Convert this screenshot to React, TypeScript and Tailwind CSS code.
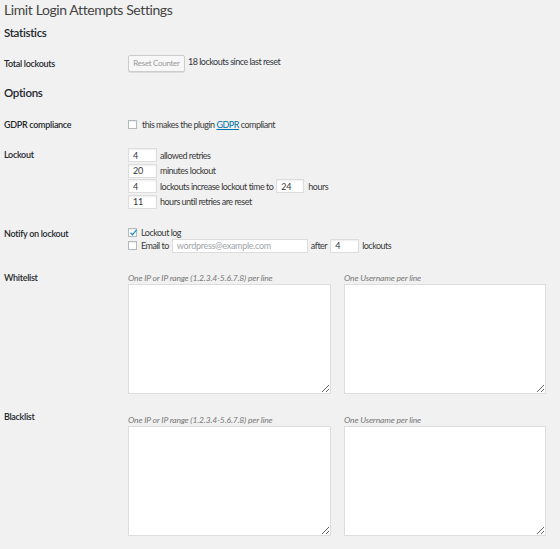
import React from "react";

const Check = ({ checked }: { checked?: boolean }) => (
  <span className="relative inline-block w-[9px] h-[9px] border border-[#b4b9be] bg-white shadow-[inset_0_1px_1px_rgba(0,0,0,0.08)] shrink-0">
    {checked && (
      <svg className="absolute left-[0px] top-[-1px]" width="9" height="9" viewBox="0 0 9 9">
        <path d="M1.5 4.8 L3.5 6.8 L7.5 1.8" stroke="#1e8cbe" strokeWidth="1.3" fill="none" />
      </svg>
    )}
  </span>
);

const Num = ({ v, w = "w-[29px]" }: { v: string; w?: string }) => (
  <input
    readOnly
    value={v}
    className={`${w} h-[14px] shrink-0 border border-[#ddd] bg-white px-[4px] text-[9px] tracking-[-0.3px] text-[#32373c] outline-none shadow-[inset_0_1px_2px_rgba(0,0,0,0.07)]`}
  />
);

const Label = ({ children, cls = "" }: { children: React.ReactNode; cls?: string }) => (
  <div className={`w-[128px] shrink-0 pl-[4px] font-semibold text-[#23282d] text-[9px] tracking-[-0.3px] ${cls}`}>{children}</div>
);

const Hint = ({ children }: { children: React.ReactNode }) => (
  <span className="italic text-[8.5px] leading-[12px] tracking-[-0.15px] text-[#777]">{children}</span>
);

export default function App() {
  return (
    <div
      className="w-[560px] h-[549px] overflow-hidden bg-[#f1f1f1] text-[#3a3a3a] text-[9px] tracking-[-0.5px] leading-[13px] whitespace-nowrap"
      style={{ fontFamily: 'Lato, "Open Sans", sans-serif' }}
    >
      <h1 className="pl-[4px] text-[14px] tracking-[-0.4px] leading-[20px] text-[#444]">Limit Login Attempts Settings</h1>
      <h2 className="mt-[5px] pl-[4px] text-[11.5px] tracking-[-0.3px] leading-[16px] font-semibold text-[#23282d]">Statistics</h2>

      <div className="mt-[14px] flex items-center h-[17px]">
        <Label cls="w-[127px]">Total lockouts</Label>
        <button className="h-[17px] w-[57px] border border-[#ccc] bg-[#f7f7f7] rounded-[2px] text-[8px] tracking-[-0.3px] text-[#999] shadow-[0_1px_0_#ddd]">
          Reset Counter
        </button>
        <span className="ml-[3px] -mt-[4px] text-[#32373c]">18 lockouts since last reset</span>
      </div>

      <h2 className="mt-[13px] pl-[4px] text-[11.5px] tracking-[-0.3px] leading-[16px] font-semibold text-[#23282d]">Options</h2>

      <div className="mt-[16px] flex items-center h-[14px]">
        <Label>GDPR compliance</Label>
        <Check />
        <span className="ml-[5px]">
          this makes the plugin <a className="text-[#0073aa] underline">GDPR</a> compliant
        </span>
      </div>

      <div className="mt-[17px] flex">
        <Label cls="leading-[14px]">Lockout</Label>
        <div className="flex flex-col gap-[1.5px]">
          <div className="flex items-center h-[14px]">
            <Num v="4" />
            <span className="ml-[3px]">allowed retries</span>
          </div>
          <div className="flex items-center h-[14px]">
            <Num v="20" />
            <span className="ml-[3px]">minutes lockout</span>
          </div>
          <div className="flex items-center h-[14px]">
            <Num v="4" />
            <span className="ml-[3px] mr-[3px]">lockouts increase lockout time to</span>
            <Num v="24" w="w-[28px]" />
            <span className="ml-[4px]">hours</span>
          </div>
          <div className="flex items-center h-[14px]">
            <Num v="11" />
            <span className="ml-[3px]">hours until retries are reset</span>
          </div>
        </div>
      </div>

      <div className="mt-[17px] flex">
        <Label cls="leading-[16px]">Notify on lockout</Label>
        <div className="flex flex-col">
          <div className="flex items-center h-[13px]">
            <Check checked />
            <span className="ml-[4px]">Lockout log</span>
          </div>
          <div className="flex items-center h-[14px]">
            <Check />
            <span className="ml-[4px] mr-[3px]">Email to</span>
            <input
              readOnly
              placeholder="wordpress@example.com"
              className="w-[136px] h-[14px] shrink-0 border border-[#ddd] bg-white px-[4px] text-[9px] tracking-[-0.3px] placeholder:text-[#a0a5aa] outline-none"
            />
            <span className="ml-[3px] mr-[3px]">after</span>
            <Num v="4" />
            <span className="ml-[3px]">lockouts</span>
          </div>
        </div>
      </div>

      <div className="mt-[19px] flex">
        <Label cls="leading-[12px]">Whitelist</Label>
        <div className="flex gap-[13px]">
          <div className="flex flex-col">
            <Hint>One IP or IP range (1.2.3.4-5.6.7.8) per line</Hint>
            <textarea readOnly className="w-[203px] h-[110px] border border-[#ddd] bg-white outline-none" />
          </div>
          <div className="flex flex-col">
            <Hint>One Username per line</Hint>
            <textarea readOnly className="w-[202px] h-[110px] border border-[#ddd] bg-white outline-none" />
          </div>
        </div>
      </div>

      <div className="mt-[20px] flex">
        <Label cls="leading-[12px] -mt-[3px]">Blacklist</Label>
        <div className="flex gap-[13px]">
          <div className="flex flex-col">
            <Hint>One IP or IP range (1.2.3.4-5.6.7.8) per line</Hint>
            <textarea readOnly className="w-[203px] h-[110px] border border-[#ddd] bg-white outline-none" />
          </div>
          <div className="flex flex-col">
            <Hint>One Username per line</Hint>
            <textarea readOnly className="w-[202px] h-[110px] border border-[#ddd] bg-white outline-none" />
          </div>
        </div>
      </div>
    </div>
  );
}
